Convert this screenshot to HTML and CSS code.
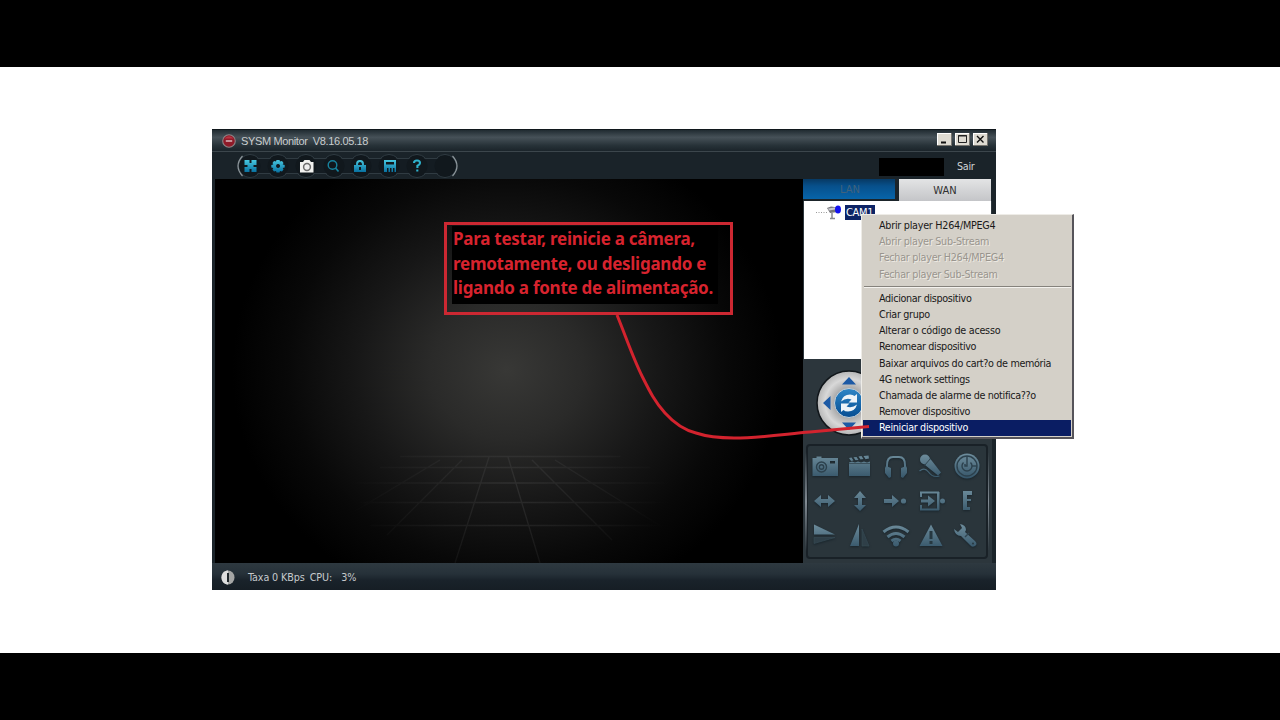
FILE: index.html
```html
<!DOCTYPE html>
<html lang="pt-BR">
<head>
<meta charset="utf-8">
<title>SYSM Monitor</title>
<link rel="stylesheet" href="styles.css">
</head>
<body>
<main class="stage">
  <section class="window">
    <header class="titlebar">
      <svg class="logo" width="14" height="14" viewBox="0 0 14 14"><circle cx="7" cy="7" r="6.3" fill="#8f1a28" stroke="#8b8587" stroke-width="1.1"/><path d="M2.5 4.5Q7 0 11.5 4.5Z" fill="#b83442"/><path d="M3.8 7h6.400" stroke="#e0c4c8" stroke-width="1.400"/></svg>
      <h1 class="title">SYSM Monitor&nbsp; V8.16.05.18</h1>
      <div class="controls">
        <button class="ctl"><svg width="15" height="13"><path d="M4 9.500h5" stroke="#111" stroke-width="2"/></svg></button>
        <button class="ctl"><svg width="15" height="13"><path d="M3.5 2.5h8v7h-8zM3 3h9" stroke="#222" fill="none"/></svg></button>
        <button class="ctl"><svg width="15" height="13"><path d="M4 3l6.500 6.500M10.500 3L4 9.500" stroke="#111" stroke-width="1.400"/></svg></button>
      </div>
    </header>
    <div class="toolbar">
      <svg class="tools" width="222" height="26" viewBox="236 153 222 26">
        <defs><linearGradient id="cy" x1="0" y1="0" x2="0" y2="1"><stop offset="0" stop-color="#48c8e0"/><stop offset="1" stop-color="#0871a0"/></linearGradient></defs>
        <g fill="#121a20" stroke="#303b42" stroke-width="1"><circle cx="250" cy="166" r="11.5"/><circle cx="278" cy="166" r="11.5"/><circle cx="306" cy="166" r="11.5"/><circle cx="334" cy="166" r="11.5"/><circle cx="361" cy="166" r="11.5"/><circle cx="389" cy="166" r="11.5"/><circle cx="417" cy="166" r="11.5"/><circle cx="445" cy="166" r="11.5"/></g>
        <path d="M250 158.500h195M250 173.500h195" stroke="#303b42"/><path d="M250 159h195v14H250z" fill="#141c22"/>
        <g fill="#11181d"><circle cx="250" cy="166" r="10.500"/><circle cx="278" cy="166" r="10.500"/><circle cx="306" cy="166" r="10.500"/><circle cx="334" cy="166" r="10.500"/><circle cx="361" cy="166" r="10.500"/><circle cx="389" cy="166" r="10.500"/><circle cx="417" cy="166" r="10.500"/><circle cx="445" cy="166" r="10.500"/></g>
        <g fill="none" stroke="#8d969b" stroke-width="1.200"><path d="M242.500 156Q233.500 166 242.500 176M452.500 156Q461.500 166 452.500 176"/></g>
        <g fill="url(#cy)"><path d="M244.500 160h5v3h2v-3h5v5h-3v2h3v5h-5v-3h-2v3h-5v-5h3v-2h-3z"/>
        <path fill-rule="evenodd" d="M276.500 160h3l.5 1.600 2-.6 1.500 2-.8 1.500 2 .5v2.500l-2 .5.8 1.500-1.500 2-2-.6-.5 1.600h-3l-.5-1.600-2 .6-1.500-2 .8-1.500-2-.5v-2.500l2-.5-.8-1.500 1.500-2 2 .6zM278 164a2 2 0 1 0 .1 0z"/>
        <path fill-rule="evenodd" d="M354 165h2v-1q0-4 4-4t4 4v1h2v7h-12zM358 165h4q0-3-2-3t-2 3zM359 167v3h2v-3z"/>
        <path fill-rule="evenodd" d="M384 160h12v12h-1.500v-4h-1.500v4h-1.500v-4h-1.500v4h-1.500v-4h-1.500v4h-3zM386 162v2.500h8V162z"/></g>
        <path d="M300 162h3l1.500-2h5l1.500 2h2.500v10.500H300z" fill="#f1f1ef"/><circle cx="307" cy="167" r="3.400" fill="#eee" stroke="#6c6c6c" stroke-width="1.500"/>
        <circle cx="332.500" cy="165" r="4.300" fill="none" stroke="#1784a0" stroke-width="1.400"/><path d="M335.500 168l3 3.500" stroke="#1784a0" stroke-width="1.700"/>
        <path d="M414 163q0-2.500 3-2.500t3 2.500q0 1.600-2.600 2.800V168M417.300 169.500v2" fill="none" stroke="#2fb2cd" stroke-width="2.100"/>
      </svg>
      <span class="field"></span><span class="exit">Sair</span>
    </div>
    <div class="body">
      <div class="video">
        <svg width="587" height="384" viewBox="215 179 587 384">
          <defs><radialGradient id="fade" gradientUnits="userSpaceOnUse" cx="510" cy="485" r="160"><stop offset="0" stop-color="#4a4a4a" stop-opacity=".4"/><stop offset="1" stop-color="#444" stop-opacity="0"/></radialGradient></defs>
          <g stroke="url(#fade)" stroke-width="1.300" fill="none"><path d="M400 456.500h220v.1M380 467.500h270v.1M350 483h320v.1M360 502.500h320v.1M370 525.500h310v.1M489 457l-34 106M508 457l32 106M532 460l80 80M462 460l-75 75M555 460l120 75M440 460l-100 60"/></g>
        </svg>
      </div>
      <aside class="side">
        <nav class="tabs"><span class="tab lan">LAN</span><span class="tab wan">WAN</span></nav>
        <div class="tree">
          <svg width="29" height="16" viewBox="0 0 29 16"><path d="M0 7.500h11" stroke="#999" stroke-dasharray="1 1.500"/><path d="M11 3l4-1.500 7 1V7l-8 1z" fill="#77777c"/><path d="M12 3.500l7-1v2l-6 1z" fill="#c9c9cf"/><path d="M16 8v5M14 13.500h5" stroke="#8a8a90" stroke-width="1.500"/><ellipse cx="22" cy="4.500" rx="3" ry="4" fill="#1414ef"/></svg>
          <span class="cam">CAM1</span>
        </div>
        <div class="ptz">
          <svg width="66" height="66" viewBox="0 0 66 66">
            <defs><radialGradient id="dial"><stop offset=".45" stop-color="#a9a9a9"/><stop offset=".75" stop-color="#d8d8d8"/><stop offset="1" stop-color="#b5b5b5"/></radialGradient><linearGradient id="bl" x1="0" y1="0" x2="0" y2="1"><stop offset="0" stop-color="#2e86c6"/><stop offset="1" stop-color="#064d92"/></linearGradient></defs>
            <circle cx="33" cy="33" r="32" fill="url(#dial)" stroke="#11161a" stroke-width="1.500"/>
            <g fill="#1d5aa5"><path d="M33 7l7 7.500H26zM33 60l7-7.500H26zM7 33l7.500-7v14zM59.500 33l-8-7v14z"/></g>
            <circle cx="33" cy="33" r="14.500" fill="url(#bl)" stroke="#c4d0da"/>
            <g fill="#eef4f8"><path d="M25 31.500Q27 24.500 34 24.500q3 0 4.500 1.500l2.500-2v8.500h-8.500l3-3q-5.500-2-10.500 2zM41 34.500Q39 41.500 32 41.500q-3 0-4.500-1.500L25 42v-8.500h8.500l-3 3q5.500 2 10.500-2z"/></g>
          </svg>
        </div>
        <svg width="0" height="0" class="defs"><defs><linearGradient id="st" gradientUnits="userSpaceOnUse" x1="0" y1="2" x2="0" y2="28"><stop offset="0" stop-color="#708f9e"/><stop offset="1" stop-color="#345468"/></linearGradient></defs></svg>
        <div class="pad">
          <svg viewBox="0 0 30 30"><path fill-rule="evenodd" d="M2.500 7h4V5.500h5V7H28v18H2.500zM20 10v2.500h5V10z"/><circle cx="11.500" cy="16" r="5" class="ring"/><circle cx="11.500" cy="16" r="2.200" class="ring"/></svg>
          <svg viewBox="0 0 30 30"><path d="M4 13h21v12H4zM4 7l2.500-.5 2 3-2.500.5zM8.500 6.300l3-.4 2 3-3 .4zM13.500 5.500l3-.4 2 3-3 .4zM18.500 5l5-.5.5 3-3.500.7zM4 11.500l3-1 3 1 3-1 3 1 3-1 3 1 3-1v2H4z"/></svg>
          <svg viewBox="0 0 30 30"><path d="M6 20V14Q6 6 12 6h6q6 0 6 8v6" class="line thin"/><path d="M5 15l5 2v9l-2 1-4-5v-5zM25 15l-5 2v9l2 1 4-5v-5z"/></svg>
          <svg viewBox="0 0 30 30"><circle cx="9" cy="8.500" r="5"/><path d="M14.500 8l10.500 13.500-3 3L9 14z"/><path d="M3.500 20q5-4 9 1 4 6 11 4" class="line slim"/><path d="M14.500 7.500l-6 7" class="cut"/></svg>
          <svg viewBox="0 0 30 30"><circle cx="15" cy="15" r="12.500"/><circle cx="15" cy="15" r="10" class="ring slim"/><path d="M15 5v10h-2v-2M11.500 11.500a5 5 0 1 0 7 0" class="ring"/><path d="M20 15h5" class="ring"/></svg>
          <svg viewBox="0 0 30 30"><path d="M4 15l7-6v4h7V9l7 6-7 6v-4h-7v4z"/></svg>
          <svg viewBox="0 0 30 30"><path d="M15 5l6 7h-4v7h4l-6 6-6-6h4v-7H9z"/></svg>
          <svg viewBox="0 0 30 30"><path d="M3 13h8V9l7 6-7 6v-4H3z"/><circle cx="22.500" cy="15" r="2.600"/></svg>
          <svg viewBox="0 0 30 30"><path d="M5 11V6.500h17V11M5 19v4.500h17V19" class="line thin"/><path d="M5 13.500h7V9.500l7 5.500-7 5.500v-4H5zM21 6h2.500v18H21z"/><circle cx="26.500" cy="15" r="2.500"/></svg>
          <svg viewBox="0 0 30 30"><path d="M11 5h9v4h-5v4h4v2h-4v6h3v3h-7z"/></svg>
          <svg viewBox="0 0 30 30"><path d="M4 3.500l21 10H4z"/><path d="M4 22.500l21-6H4z" class="dim"/></svg>
          <svg viewBox="0 0 30 30"><path d="M14 3v22H5z"/><path d="M17 8v17h7z" class="dim"/></svg>
          <svg viewBox="0 0 30 30"><path d="M2.500 11q12.500-10 25 0M6.500 16q8.500-7 17 0M10.500 20q4.500-3.500 9 0" class="line"/><circle cx="15" cy="22.500" r="3"/></svg>
          <svg viewBox="0 0 30 30"><path d="M15 3.500L26.500 25h-23z"/><path d="M15 10v8M15 20v3" class="mark"/></svg>
          <svg viewBox="0 0 30 30"><path d="M8 3q6 1 6 6l-1 2 10 9q3 3 0 5t-5-1l-9-9q-6 0-7-7l4 3 4-4z"/><path d="M13 16l4-4" class="cut wide"/><circle cx="21" cy="22.500" r="1" class="hole"/></svg>
        </div>
      </aside>
    </div>
    <footer class="status">
      <svg width="14" height="15" viewBox="0 0 14 15"><ellipse cx="7" cy="7.500" rx="6.500" ry="7" fill="#a5a6a5"/><path d="M6 .5h1v14H6Q.5 13 .5 7.500T6 .5" fill="#dedede"/><path d="M7 3v9" stroke="#20272b" stroke-width="2"/></svg>
      <span class="rate">Taxa 0 KBps</span><span class="cpu">CPU:</span><span>3%</span>
    </footer>
  </section>
  <ul class="menu">
    <li class="wide">Abrir player H264/MPEG4</li>
    <li class="off">Abrir player Sub-Stream</li>
    <li class="off">Fechar player H264/MPEG4</li>
    <li class="off">Fechar player Sub-Stream</li>
    <li class="sep"></li>
    <li>Adicionar dispositivo</li>
    <li>Criar grupo</li>
    <li class="wide">Alterar o código de acesso</li>
    <li>Renomear dispositivo</li>
    <li>Baixar arquivos do cart?o de memória</li>
    <li>4G network settings</li>
    <li>Chamada de alarme de notifica??o</li>
    <li>Remover dispositivo</li>
    <li class="on">Reiniciar dispositivo</li>
  </ul>
  <div class="note"><p>Para testar, reinicie a câmera,<br>remotamente, ou desligando e<br>ligando a fonte de alimentação.</p></div>
  <svg class="curve" width="1280" height="586" viewBox="0 67 1280 586"><path d="M617 315C626 337 633 358 642.500 377C650 392 655 402 665 413C674 423 684 430 696 433C708 437 721 438 734 438C760 438 786 434 810 432L869 426.500" fill="none" stroke="#d3232e" stroke-width="3"/></svg>
</main>
</body>
</html>
```
FILE: styles.css
```css
* { box-sizing: border-box; }
body { margin: 0; width: 1280px; height: 720px; overflow: hidden; background: #000; padding: 67px 0; font: 10.700px "DejaVu Sans Condensed", "DejaVu Sans", sans-serif; font-stretch: condensed; }
.stage { position: relative; height: 586px; background: #fff; padding: 62px 0 0 212px; }
.window { width: 784px; height: 461px; background: #1b242a; display: flex; flex-direction: column; border-top: 1px solid #10171c; }
.titlebar { height: 22px; display: flex; align-items: center; padding: 2px 8px 0 10px; gap: 5px; background: linear-gradient(#202b31, #465158 35%, #263137 75%, #1b242a); border-bottom: 1px solid #3c464c; }
.title { margin: 0; flex: 1; font: 11px "Liberation Sans", sans-serif; color: #c9cdcf; white-space: nowrap; letter-spacing: -.37px; }
.controls { display: flex; gap: 3px; margin-top: -4px; }
.ctl { width: 15px; height: 13px; padding: 0; border: 0; background: #dedbd2; box-shadow: inset -1px -1px #77756f, inset 1px 1px #fff; display: flex; }
.toolbar { height: 28px; display: flex; align-items: center; padding: 0 20px 0 24px; background: #1a2329; }
.field { width: 65px; height: 18px; margin: 3px 13px 0 421px; background: #000; }
.tools { flex: none; }
.exit { color: #d0d3d5; margin-top: 2px; letter-spacing: -.3px; }
.body { flex: 1; display: flex; padding-left: 3px; }
.video { width: 587px; height: 384px; background: radial-gradient(ellipse 275px 245px at 292px 191px, #383836 0, #2a2a29 28%, #171717 55%, #080808 80%, #000 100%); }
.video svg { display: block; }
.side { flex: 1; background: #2c363c; border-right: 4px solid #1b242a; border-left: 1px solid #000; }
.tabs { display: flex; height: 22px; background: #1b242a; }
.tab { display: flex; align-items: center; justify-content: center; font-size: 11px; letter-spacing: .1px; }
.lan { width: 92px; height: 20px; padding: 1px 0 0 2px; background: linear-gradient(#073963, #07508b 35%, #0764a9); color: #41627c; }
.wan { width: 92px; margin-left: 4px; background: linear-gradient(#e3e4e5, #c4c5c8); color: #303030; }
.tree { height: 158px; margin-left: 1px; width: 187px; background: #fff; display: flex; padding: 4px 0 0 12px; }
.cam { height: 15px; width: 30px; line-height: 15px; background: #0d2466; color: #fff; padding-left: 1px; font-size: 11px; letter-spacing: -.3px; }
.ptz { height: 85px; padding: 11px 0 0 13px; }
.ptz svg { display: block; }
.defs { display: block; }
.pad { position: relative; width: 182px; height: 115px; margin-left: 3px; padding: 5px 2px 0; display: grid; grid-template-columns: repeat(5, 35.4px); grid-template-rows: repeat(3, 34.700px); background: #2a353b; border: 2px solid #192127; border-radius: 4px; }
.pad::before, .pad::after { content: ""; position: absolute; top: 6px; bottom: 6px; left: -3px; width: 1.500px; background: linear-gradient(transparent, #828b93, transparent); }
.pad::after { left: auto; right: -3px; }
.pad svg { width: 30px; height: 30px; fill: url(#st); filter: drop-shadow(0 1px 1px #18242b); }
.pad .line { fill: none; stroke: url(#st); stroke-width: 3; }
.pad .thin { stroke-width: 2; }
.pad .slim { stroke-width: 1.2; }
.pad .hole { fill: #273943; }
.pad .ring { fill: none; stroke: #2c414d; stroke-width: 1.4; }
.pad .cut { stroke: #304550; stroke-width: 1; }
.pad .wide { stroke-width: 1.5; }
.pad .mark { stroke: #263841; stroke-width: 3; }
.pad .dim { fill: #2f3f48; stroke: #374a55; stroke-width: .7; }
.status { height: 27px; background: linear-gradient(#2e3940, #263139 40%, #19222a 65%, #161e25); display: flex; align-items: center; padding: 1px 0 0 9px; color: #c6cacc; letter-spacing: -.1px; }
.rate { margin-left: 13px; }
.cpu { margin: 0 9px 0 5px; }
.menu { position: absolute; left: 861px; top: 147px; width: 213px; height: 225px; margin: 0; padding: 3px 1px 0 2px; list-style: none; background: #d4d0c8; border: 1px solid #eeece7; border-right: 2px solid #56545a; border-bottom: 2px solid #56545a; color: #191919; letter-spacing: -.33px; }
.menu li { height: 16.200px; line-height: 16px; padding-left: 15px; white-space: nowrap; }
.menu .wide { letter-spacing: -.25px; }
.menu .off { color: #99958e; text-shadow: 1px 1px #eeeae3; letter-spacing: -.26px; }
.menu .sep { height: 2px; margin: 3px 0; border-top: 1px solid #85827c; border-bottom: 1px solid #f4f2ee; }
.menu .on { background: #0a1d63; color: #fff; margin-left: -1px; padding-left: 16px; }
.note { position: absolute; left: 444px; top: 155px; width: 289px; height: 93px; border: 3px solid #cc2832; padding: 1px 0 0 5px; }
.note p { margin: 0; width: 266px; height: 78px; padding: .8px 0 0 1px; background: #000; color: #d7232e; font: bold 17px/24.700px "Noto Sans", sans-serif; letter-spacing: -.26px; white-space: nowrap; }
.curve { position: absolute; left: 0; top: 0; pointer-events: none; }
```
